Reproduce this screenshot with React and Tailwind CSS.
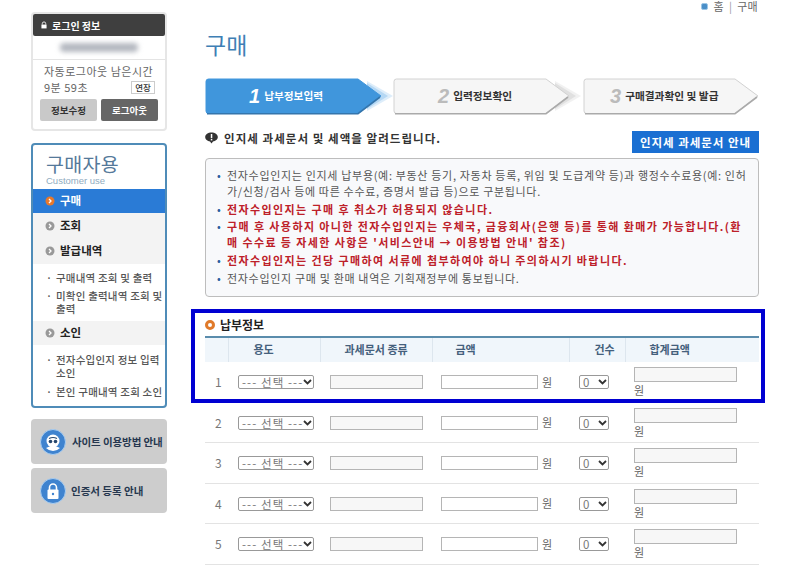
function Bullet({ on }) {
  return (
    <svg width="10" height="10" viewBox="0 0 10 10" className="shrink-0">
      <circle cx="5" cy="5" r="4.5" fill={on ? "#e8782a" : "#999"} />
      <path d="M4 3 L6 5 L4 7" fill="none" stroke="#fff" strokeWidth="1.3" />
    </svg>
  );
}

function MenuRow({ label, active, h }) {
  return (
    <div className={`flex shrink-0 items-center gap-[5px] pl-[12px] ${h} ${active ? "bg-[#2a7bd6] text-white" : "bg-[#f3f3f3] text-[#222]"} text-[11.5px] font-bold`}>
      <Bullet on={active} />
      <span>{label}</span>
    </div>
  );
}

function Sub({ children, cls = "" }) {
  return (
    <div className={`flex pl-[13px] text-[10.5px] font-medium leading-[13px] tracking-[0.2px] text-[#555] ${cls}`}>
      <span className="w-[10px] shrink-0">·</span>
      <span>{children}</span>
    </div>
  );
}

function Step({ w, width, fill, edge, stroke, glow, bodyEnd, tip, num, label, numCls, textCls, gap }) {
  return (
    <div className={`relative h-[37px] flex items-center ${w}`}>
      <svg className="absolute inset-0" width={width} height="37" viewBox={`0 0 ${width} 37`}>
        <path d={`M${tip - 14} 3 L${tip + 12} 18 L${tip - 14} 33 Z`} fill={glow} opacity="0.3" />
        <path d={`M${tip - 14} 5 L${tip + 7} 18 L${tip - 14} 31 Z`} fill={glow} opacity="0.5" />
        <path d={`M3.5 1 H${bodyEnd} L${tip} 18 L${bodyEnd} 35.5 H3.5 Q1 35.5 1 33 V3.5 Q1 1 3.5 1 Z`} fill={fill} stroke={stroke} />
        <path d={`M2 35.7 H${bodyEnd} L${tip - 1} 19`} fill="none" stroke={edge} strokeWidth="1.6" />
      </svg>
      <div className={`relative flex items-center ${gap}`}>
        <span className={`text-[20px] font-bold italic leading-none [font-family:'Liberation_Sans',sans-serif] ${numCls}`}>{num}</span>
        <span className={`text-[10.7px] font-bold ${textCls}`}>{label}</span>
      </div>
    </div>
  );
}

function Note({ red, children, cls = "" }) {
  return (
    <li className={`flex ${cls}`}>
      <span className="w-[10px] shrink-0 text-[#2b5f9e] text-[11px] leading-[16px]">•</span>
      <span className={red ? "font-bold text-[#bd2029] tracking-[1.4px]" : "text-[#555] tracking-[0.68px]"}>{children}</span>
    </li>
  );
}

function Picker({ w, label, track }) {
  return (
    <div className={`relative ${w} h-[14px]`}>
      <select className={`block appearance-none w-full h-[14px] border border-[#999] rounded-[2px] bg-white text-[11.5px] leading-[12px] ${track} text-[#777] pl-[3px] py-0`}>
        <option>{label}</option>
      </select>
      <svg width="9" height="6" viewBox="0 0 9 6" className="absolute right-[2px] top-[4px] pointer-events-none">
        <path d="M1 1 L4.5 4.5 L8 1" fill="none" stroke="#333" strokeWidth="1.8" />
      </svg>
    </div>
  );
}

function Row({ n, h }) {
  return (
    <tr className={`${h} border-b border-[#e3e3e3] text-[11px] text-[#666]`}>
      <td className="pl-[10px] text-[12px] text-[#777]">{n}</td>
      <td className="pl-[10px]">
        <Picker w="w-[76px]" label="--- 선택 ---" track="tracking-[1.1px]" />
      </td>
      <td className="pl-[10px]">
        <input disabled className="block w-[93px] h-[14px] border border-[#b5b5b5] bg-[#f7f7f7]" />
      </td>
      <td className="pl-[9px]">
        <div className="flex items-center gap-[4px]">
          <input className="block w-[97px] h-[14px] border border-[#b5b5b5] bg-white" />
          <span>원</span>
        </div>
      </td>
      <td className="pl-[10px]">
        <Picker w="w-[30px]" label="0" track="tracking-normal" />
      </td>
      <td className="pl-[9px] align-top pt-[5px]">
        <input disabled className="block w-[103px] h-[15px] border border-[#b5b5b5] bg-[#f7f7f7]" />
        <div className="leading-[14px] mt-[1px]">원</div>
      </td>
    </tr>
  );
}

export default function App() {
  return (
    <div className="relative flex w-[800px] h-[565px] overflow-hidden bg-white [font-family:'Noto_Sans_CJK_KR','Liberation_Sans',sans-serif] text-[#555]">
      {/* sidebar */}
      <aside className="w-[205px] shrink-0 pl-[31px] pt-[12px]">
        <div className="w-[136px] h-[119px] border-2 border-[#e6e6e6] rounded-[4px] flex flex-col">
          <div className="h-[22px] bg-[#3f3f3f] rounded-[2px] flex items-center gap-[5px] pl-[8px] text-white text-[10px] font-bold">
            <svg width="6" height="8" viewBox="0 0 7 8"><path d="M1.5 3.5 V2.4 A2 2 0 0 1 5.5 2.4 V3.5" fill="none" stroke="#fff" /><rect x="0.5" y="3.5" width="6" height="4.5" fill="#fff" /></svg>
            <span>로그인 정보</span>
          </div>
          <div className="h-[24px] border-b border-[#e4e4e4] flex items-center justify-center">
            <div className="w-[78px] h-[9px] bg-[#b4b8c0] blur-[2.5px] rounded" />
          </div>
          <div className="pl-[11px] pr-[10px] pt-[3px] text-[11px] leading-[16px] text-[#666] tracking-[0.5px]">
            <div>자동로그아웃 남은시간</div>
            <div className="flex items-center justify-between">
              <span>9분 59초</span>
              <span className="border border-[#ccc] h-[13px] w-[24px] text-[8.5px] leading-[11px] text-center text-[#333] font-medium tracking-normal">연장</span>
            </div>
          </div>
          <div className="flex gap-[4px] pl-[7px] mt-[4px]">
            <div className="w-[57px] h-[22px] rounded-[2px] bg-[#c9c9c9] flex items-center justify-center text-[9.5px] font-bold text-[#333]">정보수정</div>
            <div className="w-[57px] h-[22px] rounded-[2px] bg-[#666] flex items-center justify-center text-[9.5px] font-bold text-white">로그아웃</div>
          </div>
        </div>

        <div className="mt-[12px] w-[136px] h-[265px] border-2 border-[#4f8cb8] rounded-[4px] flex flex-col">
          <div className="h-[44px] shrink-0 pl-[13px] pt-[7px]">
            <div className="text-[19.5px] leading-[24px] text-[#55799a] tracking-[0.3px]">구매자용</div>
            <div className="text-[9.5px] leading-[9px] text-[#8fabc0] [font-family:'Liberation_Sans',sans-serif]">Customer use</div>
          </div>
          <MenuRow label="구매" active h="h-[24px]" />
          <MenuRow label="조회" h="h-[25px]" />
          <MenuRow label="발급내역" h="h-[26px]" />
          <div className="pt-[7px] pb-[6px] flex flex-col gap-[5px]">
            <Sub>구매내역 조회 및 출력</Sub>
            <Sub>미확인 출력내역 조회 및 출력</Sub>
          </div>
          <MenuRow label="소인" h="h-[24px]" />
          <div className="pt-[8px] flex flex-col gap-[6px]">
            <Sub>전자수입인지 정보 입력 소인</Sub>
            <Sub>본인 구매내역 조회 소인</Sub>
          </div>
        </div>

        <div className="mt-[11px] w-[136px] h-[45px] rounded-[4px] bg-[#cdcdcd] flex items-center gap-[6px] pl-[9px] text-[10.5px] font-bold text-[#26374f] tracking-[-0.1px]">
          <svg width="26" height="26" viewBox="0 0 26 26" className="shrink-0">
            <circle cx="13" cy="13" r="12.5" fill="#3f83cf" stroke="#a9cdf0" />
            <circle cx="13" cy="12" r="6.5" fill="#fff" />
            <path d="M6 19 Q13 15 20 19 Q17 22 13 22 Q9 22 6 19 Z" fill="#fff" />
            <circle cx="10.5" cy="12.5" r="1.8" fill="#27476e" />
            <circle cx="15.5" cy="12.5" r="1.8" fill="#27476e" />
            <path d="M9 9.5 Q13 7.5 17 9.5" fill="none" stroke="#27476e" strokeWidth="1.2" />
          </svg>
          <span>사이트 이용방법 안내</span>
        </div>
        <div className="mt-[4px] w-[136px] h-[45px] rounded-[4px] bg-[#cdcdcd] flex items-center gap-[5px] pl-[9px] text-[10.5px] font-bold text-[#26374f]">
          <svg width="26" height="26" viewBox="0 0 26 26" className="shrink-0">
            <circle cx="13" cy="13" r="12.5" fill="#3f83cf" stroke="#a9cdf0" />
            <path d="M9.5 12 V9.5 A3.5 3.5 0 0 1 16.5 9.5 V12" fill="none" stroke="#fff" strokeWidth="1.6" />
            <rect x="7.5" y="11.5" width="11" height="9.5" rx="1" fill="#fff" />
            <circle cx="13" cy="16" r="1.2" fill="#3f83cf" />
          </svg>
          <span>인증서 등록 안내</span>
        </div>
      </aside>

      {/* main */}
      <main className="w-[554px] shrink-0 flex flex-col">
        <div className="h-[12px] flex items-center justify-end pr-[1px] text-[11px] leading-[12px] text-[#666] tracking-[0.3px]">
          <span className="w-[7px] h-[7px] rounded-[2px] bg-[#4a8fc8] border border-[#9cc6e6] mr-[5px]" />
          <span>홈</span>
          <span className="text-[#999] px-[5px]">|</span>
          <span>구매</span>
        </div>
        <h1 className="h-[67px] pt-[17px] text-[23px] leading-[30px] font-normal text-[#3f7fb5]">구매</h1>

        <div className="flex">
          <Step w="w-[188px]" width={188} fill="#4096dc" edge="#3475ac" stroke="#4096dc" glow="#8fc4ee" bodyEnd={153} tip={176} num="1" label="납부정보입력" numCls="text-white" textCls="text-white" gap="ml-[44px] gap-[4px]" />
          <Step w="w-[190px]" width={190} fill="#f6f6f6" edge="#aaa" stroke="#d2d2d2" glow="#cfcfcf" bodyEnd={153} tip={176} num="2" label="입력정보확인" numCls="text-[#bbb]" textCls="text-[#333]" gap="ml-[45px] gap-[4px]" />
          <Step w="w-[176px]" width={176} fill="#f6f6f6" edge="#aaa" stroke="#d2d2d2" glow="#ffffff" bodyEnd={152} tip={175} num="3" label="구매결과확인 및 발급" numCls="text-[#bbb]" textCls="text-[#333]" gap="ml-[27px] gap-[4px]" />
        </div>

        <div className="mt-[16px] h-[23px] flex items-center justify-between">
          <div className="flex items-center gap-[6px] text-[11.5px] font-bold text-[#333] tracking-[1.05px] -mt-[8px]">
            <svg width="13" height="12" viewBox="0 0 13 12"><path d="M6.5 0.5 C10 0.5 12.8 2.3 12.8 5 C12.8 7.5 10.4 9.2 8 9.4 L6.5 11.5 L5 9.4 C2.6 9.2 0.2 7.5 0.2 5 C0.2 2.3 3 0.5 6.5 0.5 Z" fill="#333" /><rect x="5.8" y="2" width="1.5" height="4.2" fill="#fff" /><rect x="5.8" y="7" width="1.5" height="1.4" fill="#fff" /></svg>
            <span>인지세 과세문서 및 세액을 알려드립니다.</span>
          </div>
          <div className="w-[127px] h-[22px] bg-[#1a6fd2] text-white text-[11.5px] font-bold flex items-center justify-center tracking-[0.95px]">인지세 과세문서 안내</div>
        </div>

        <ul className="mt-[4px] h-[139px] shrink-0 border border-[#bdbdbd] rounded-[4px] bg-[#f8f9fb] pl-[11px] pr-[11px] pt-[8px] text-[11px] leading-[16px]">
          <Note>전자수입인지는 인지세 납부용(예: 부동산 등기, 자동차 등록, 위임 및 도급계약 등)과 행정수수료용(예: 인허가/신청/검사 등에 따른 수수료, 증명서 발급 등)으로 구분됩니다.</Note>
          <Note red cls="mt-[2px]">전자수입인지는 구매 후 취소가 허용되지 않습니다.</Note>
          <Note red cls="mt-[1px]">구매 후 사용하지 아니한 전자수입인지는 우체국, 금융회사(은행 등)를 통해 환매가 가능합니다.(환매 수수료 등 자세한 사항은 '서비스안내 → 이용방법 안내' 참조)</Note>
          <Note red cls="mt-[2px]">전자수입인지는 건당 구매하여 서류에 첨부하여야 하니 주의하시기 바랍니다.</Note>
          <Note cls="mt-[2px]">전자수입인지 구매 및 환매 내역은 기획재정부에 통보됩니다.</Note>
        </ul>

        <div className="relative mt-[19px]">
          <div className="h-[20px] pb-[2px] flex items-center gap-[5px] text-[12px] font-bold text-[#222]">
            <span className="w-[10px] h-[10px] rounded-full border-[3px] border-[#e07a2a] bg-white" />
            <span>납부정보</span>
          </div>
          <table className="w-[554px] table-fixed border-collapse">
            <colgroup>
              <col className="w-[23px]" /><col className="w-[92px]" /><col className="w-[112px]" /><col className="w-[137px]" /><col className="w-[56px]" /><col className="w-[134px]" />
            </colgroup>
            <thead>
              <tr className="h-[25px] bg-[#f0f6fb] border-t-2 border-[#5a8cac] text-[11px] font-bold text-[#44607c]">
                <th />
                <th className="text-left font-bold pl-[25px] border-l border-[#dde6ee]">용도</th>
                <th className="text-left font-bold pl-[24px] border-l border-[#dde6ee]">과세문서 종류</th>
                <th className="text-left font-bold pl-[23px] border-l border-[#dde6ee]">금액</th>
                <th className="text-left font-bold pl-[25px] border-l border-[#dde6ee]">건수</th>
                <th className="text-left font-bold pl-[24px] border-l border-[#dde6ee]">합계금액</th>
              </tr>
            </thead>
            <tbody>
              <Row n="1" h="h-[41px]" />
              <Row n="2" h="h-[40px]" />
              <Row n="3" h="h-[41px]" />
              <Row n="4" h="h-[40px]" />
              <Row n="5" h="h-[41px]" />
            </tbody>
          </table>
          <div className="absolute left-[-14px] top-[-7px] w-[574px] h-[94px] border-4 border-[#0000d2] pointer-events-none" />
        </div>
      </main>
    </div>
  );
}
